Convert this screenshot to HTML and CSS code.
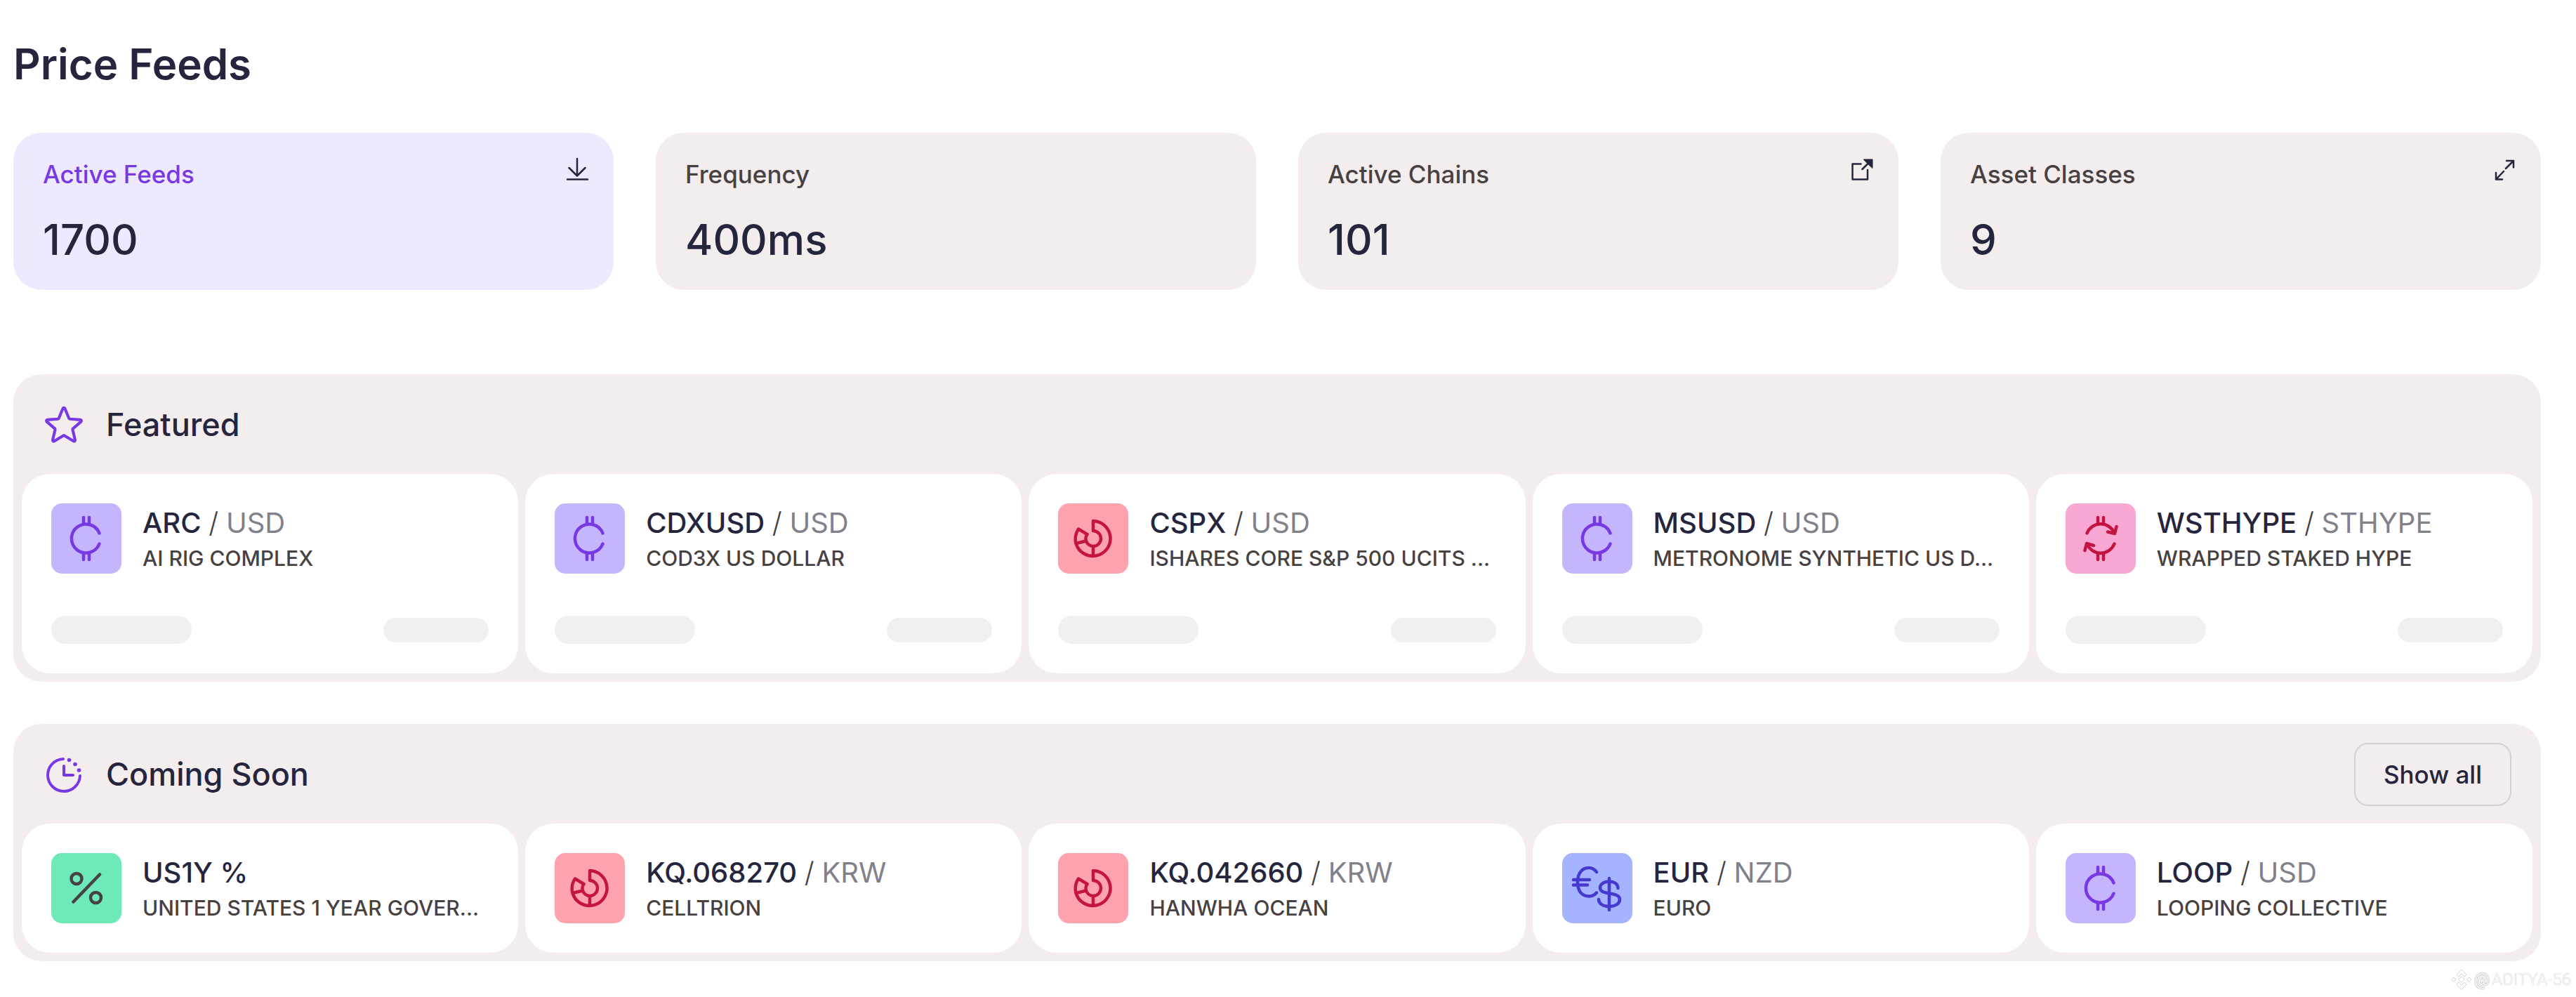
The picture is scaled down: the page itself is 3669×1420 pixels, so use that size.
FILE: index.html
```html
<!DOCTYPE html>
<html lang="en">
<head>
<meta charset="utf-8">
<title>Price Feeds</title>
<link rel="stylesheet" href="styles.css">
</head>

<body>
<!-- shared icons, 100x100 -->
<svg class="sprite" aria-hidden="true">
    <symbol id="crypto" viewBox="0 0 100 100">
        <path d="M68.5 42.5A20.5 20.5 0 1 0 68.5 57.5M46 20V30M54 20V30M46 70V80M54 70V80"/>
    </symbol>
    <symbol id="equity" viewBox="0 0 100 100">
        <path d="M50 25A25 25 0 1 1 25.5 57A26 26 0 0 1 29 36.5L41.500 44A11 11 0 0 0 40 53.500L25.500 57M50 25V39A11 11 0 0 1 50 61V75M50 61A11 11 0 0 1 40 53.500"/>
    </symbol>
    <symbol id="redemption" viewBox="0 0 100 100">
        <path d="M30.500 42.500A21 21 0 0 1 69.500 42.500M60 40.500L70 43L72.500 33M69.500 57.500A21 21 0 0 1 30.500 57.500M40 60L30 57L27.500 67M46 20V29M54 20V29M46 71V80M54 71V80"/>
    </symbol>
    <symbol id="rates" viewBox="0 0 100 100">
        <circle cx="36" cy="36.500" r="7.500"/>
        <circle cx="63.500" cy="63.500" r="7.500"/>
        <path d="M31.500 69.500L69 30.500"/>
    </symbol>
    <symbol id="fx" viewBox="0 0 100 100">
        <path d="M49 27C46 23 42 21 38 21C28 21 22 29 22 41.500C22 54 28 61.500 38 61.500C42 61.500 46 60 49 56.500M16 38H39M16 45.500H36M67 36V81M79.500 50C79.500 44 74 40.500 67 40.500C60 40.500 54 44 54 49.500C54 61 82 54 82 66C82 72 76 76 67 76C58 76 52 72 52 66"/>
    </symbol>
</svg>

<main class="page">
    <h1 class="page-title">Price Feeds</h1>

    <div class="stats">
        <div class="stat active">
            <div class="stat-text">
                <div class="stat-label">Active Feeds</div>
                <div class="stat-value">1700</div>
            </div>
            <button class="stat-action" type="button" aria-label="Go to feeds">
                <svg viewBox="0 0 40 40"><path d="M20 5V29M8.500 18L20 29.500L31.500 18M6 34.500H35"/></svg>
            </button>
        </div>
        <div class="stat">
            <div class="stat-text">
                <div class="stat-label">Frequency</div>
                <div class="stat-value">400ms</div>
            </div>
        </div>
        <div class="stat">
            <div class="stat-text">
                <div class="stat-label">Active Chains</div>
                <div class="stat-value">101</div>
            </div>
            <a class="stat-action" href="#chains" aria-label="Chains">
                <svg viewBox="0 0 40 40"><path d="M18.500 12.500H6.500V34.500H28V21M20.500 20L30 10.500"/><path class="solid" d="M22.500 6H35V18.500L31 15L26.500 10.500Z"/></svg>
            </a>
        </div>
        <div class="stat">
            <div class="stat-text">
                <div class="stat-label">Asset Classes</div>
                <div class="stat-value">9</div>
            </div>
            <button class="stat-action" type="button" aria-label="Expand">
                <svg viewBox="0 0 40 40"><path d="M23 8H33V17.500M33 8L22 19M8 25V34.500H17M8 34.500L19 23"/></svg>
            </button>
        </div>
    </div>

    <section class="panel">
        <div class="panel-head">
            <svg class="panel-icon" viewBox="1 1 22 22"><path stroke-width="1.500" d="M11.480 3.499a.562.562 0 011.040 0l2.125 5.111a.563.563 0 00.475.345l5.518.442c.499.040.701.663.321.988l-4.204 3.602a.563.563 0 00-.182.557l1.285 5.385a.562.562 0 01-.840.610l-4.725-2.885a.563.563 0 00-.586 0L6.982 20.540a.562.562 0 01-.840-.610l1.285-5.386a.562.562 0 00-.182-.557l-4.204-3.602a.563.563 0 01.321-.988l5.518-.442a.563.563 0 00.475-.345L11.480 3.500z"/></svg>
            <h2 class="panel-title">Featured</h2>
        </div>
        <div class="feeds">
            <article class="feed">
                <div class="feed-top">
                    <svg class="feed-icon crypto"><use href="#crypto"/></svg>
                    <div class="feed-text">
                        <div class="feed-name">ARC <span class="slash">/</span> <span class="quote">USD</span></div>
                        <div class="feed-desc">AI RIG COMPLEX</div>
                    </div>
                </div>
                <div class="loading"><span class="bar price"></span><span class="bar change"></span></div>
            </article>
            <article class="feed">
                <div class="feed-top">
                    <svg class="feed-icon crypto"><use href="#crypto"/></svg>
                    <div class="feed-text">
                        <div class="feed-name">CDXUSD <span class="slash">/</span> <span class="quote">USD</span></div>
                        <div class="feed-desc">COD3X US DOLLAR</div>
                    </div>
                </div>
                <div class="loading"><span class="bar price"></span><span class="bar change"></span></div>
            </article>
            <article class="feed">
                <div class="feed-top">
                    <svg class="feed-icon equity"><use href="#equity"/></svg>
                    <div class="feed-text">
                        <div class="feed-name">CSPX <span class="slash">/</span> <span class="quote">USD</span></div>
                        <div class="feed-desc">ISHARES CORE S&amp;P 500 UCITS ...</div>
                    </div>
                </div>
                <div class="loading"><span class="bar price"></span><span class="bar change"></span></div>
            </article>
            <article class="feed">
                <div class="feed-top">
                    <svg class="feed-icon crypto"><use href="#crypto"/></svg>
                    <div class="feed-text">
                        <div class="feed-name">MSUSD <span class="slash">/</span> <span class="quote">USD</span></div>
                        <div class="feed-desc">METRONOME SYNTHETIC US D...</div>
                    </div>
                </div>
                <div class="loading"><span class="bar price"></span><span class="bar change"></span></div>
            </article>
            <article class="feed">
                <div class="feed-top">
                    <svg class="feed-icon redemption"><use href="#redemption"/></svg>
                    <div class="feed-text">
                        <div class="feed-name">WSTHYPE <span class="slash">/</span> <span class="quote">STHYPE</span></div>
                        <div class="feed-desc">WRAPPED STAKED HYPE</div>
                    </div>
                </div>
                <div class="loading"><span class="bar price"></span><span class="bar change"></span></div>
            </article>
        </div>
    </section>

    <section class="panel">
        <div class="panel-head">
            <svg class="panel-icon" viewBox="0 0 60 60">
                <path stroke-width="4" d="M29 8A23 23 0 1 0 53 32M30 18V31H43"/>
                <g class="dots"><circle cx="37.500" cy="9.500" r="2.800"/><circle cx="46" cy="15.500" r="2.800"/><circle cx="51.500" cy="24" r="2.800"/></g>
            </svg>
            <h2 class="panel-title">Coming Soon</h2>
            <button class="show-all" type="button">Show all</button>
        </div>
        <div class="feeds">
            <article class="feed">
                <div class="feed-top">
                    <svg class="feed-icon rates"><use href="#rates"/></svg>
                    <div class="feed-text">
                        <div class="feed-name">US1Y %</div>
                        <div class="feed-desc">UNITED STATES 1 YEAR GOVER...</div>
                    </div>
                </div>
            </article>
            <article class="feed">
                <div class="feed-top">
                    <svg class="feed-icon equity"><use href="#equity"/></svg>
                    <div class="feed-text">
                        <div class="feed-name">KQ.068270 <span class="slash">/</span> <span class="quote">KRW</span></div>
                        <div class="feed-desc">CELLTRION</div>
                    </div>
                </div>
            </article>
            <article class="feed">
                <div class="feed-top">
                    <svg class="feed-icon equity"><use href="#equity"/></svg>
                    <div class="feed-text">
                        <div class="feed-name">KQ.042660 <span class="slash">/</span> <span class="quote">KRW</span></div>
                        <div class="feed-desc">HANWHA OCEAN</div>
                    </div>
                </div>
            </article>
            <article class="feed">
                <div class="feed-top">
                    <svg class="feed-icon fx"><use href="#fx"/></svg>
                    <div class="feed-text">
                        <div class="feed-name">EUR <span class="slash">/</span> <span class="quote">NZD</span></div>
                        <div class="feed-desc">EURO</div>
                    </div>
                </div>
            </article>
            <article class="feed">
                <div class="feed-top">
                    <svg class="feed-icon crypto"><use href="#crypto"/></svg>
                    <div class="feed-text">
                        <div class="feed-name">LOOP <span class="slash">/</span> <span class="quote">USD</span></div>
                        <div class="feed-desc">LOOPING COLLECTIVE</div>
                    </div>
                </div>
            </article>
        </div>
    </section>
</main>

<div class="watermark">
    <svg viewBox="0 0 30 30"><path d="M8 8L15 1L22 8L19 11L15 7L11 11ZM1 15L4 12L7 15L4 18ZM11 15L15 11L19 15L15 19ZM23 15L26 12L29 15L26 18ZM8 22L11 19L15 23L19 19L22 22L15 29Z"/></svg>
    <span class="at">@</span>
    <span>ADITYA-56</span>
</div>
</body>
</html>
```
FILE: styles.css
```css
* {
    box-sizing: border-box;
}
body {
    margin: 0;
    background: #ffffff;
    color: #25253d;
    font-family: Inter, "Liberation Sans", sans-serif;
    font-weight: 500;
}
h1, h2 {
    margin: 0;
}
svg {
    flex: none;
    fill: none;
    stroke: currentColor;
    stroke-linecap: round;
    stroke-linejoin: round;
}
.sprite {
    position: absolute;
    width: 0;
    height: 0;
}
.page {
    padding: 61px 50px 51px 19px;
}
.page-title {
    margin-bottom: 68px;
    font-size: 60px;
    line-height: 60px;
    font-weight: 600;
}

/* stats */
.stats {
    display: grid;
    grid-template-columns: repeat(4, 1fr);
    gap: 60px;
    margin-bottom: 120px;
}
.stat {
    display: flex;
    justify-content: space-between;
    align-items: flex-start;
    padding: 32px;
    border-radius: 40px;
    background: #f3eded;
}
.stat.active {
    background: #ede9fe;
}
.stat-text {
    padding: 10px;
}
.stat-label {
    margin-bottom: 45px;
    color: #474142;
    font-size: 35px;
    line-height: 35px;
}
.active .stat-label {
    color: #7839e5;
}
.stat-value {
    font-size: 60px;
    line-height: 60px;
}
.stat-action {
    width: 40px;
    height: 40px;
    padding: 0;
    border: none;
    background: none;
    color: #25253d;
    cursor: pointer;
}
.stat-action svg {
    display: block;
    width: 40px;
    height: 40px;
    stroke-width: 2.5;
}
.solid {
    fill: currentColor;
    stroke-width: 1;
}

/* panels */
.panel {
    padding: 0 12px 12px;
    border-radius: 40px;
    background: #f3eded;
}
.panel + .panel {
    margin-top: 60px;
}
.panel-head {
    display: flex;
    align-items: center;
    gap: 30px;
    height: 142px;
    padding: 2px 30px 0;
}
.panel-icon {
    width: 60px;
    height: 60px;
    color: #7839e5;
}
.dots {
    fill: currentColor;
    stroke: none;
}
.panel-title {
    font-size: 45px;
    line-height: 60px;
    font-weight: 500;
}
.show-all {
    height: 90px;
    margin-left: auto;
    padding: 0 40px;
    border: 2px solid #d2d2d2;
    border-radius: 20px;
    background: none;
    color: #25253d;
    font: inherit;
    font-size: 35px;
    cursor: pointer;
}

/* feeds */
.feeds {
    display: grid;
    grid-template-columns: repeat(5, minmax(0, 1fr));
    gap: 10px;
}
.feed {
    padding: 42px;
    border-radius: 40px;
    background: #ffffff;
}
.feed-top {
    display: flex;
    gap: 30px;
}
.feed-icon {
    width: 100px;
    height: 100px;
    border-radius: 15px;
    stroke-width: 4.5;
}
.crypto {
    background: #c4b5fd;
    color: #7839e5;
}
.equity {
    background: #fea3ae;
    color: #c31442;
}
.redemption {
    background: #f9a8d4;
    color: #c31442;
}
.rates {
    background: #6ee9b8;
    color: #474142;
}
.fx {
    background: #a5b4fe;
    color: #4639d0;
}
.feed-text {
    min-width: 0;
    white-space: nowrap;
}
.feed-name {
    font-size: 40px;
    line-height: 56px;
}
.slash {
    color: #474142;
    font-weight: 300;
}
.quote {
    color: #81818c;
    font-weight: 400;
}
.feed-desc {
    overflow: hidden;
    color: #474142;
    font-size: 30px;
    line-height: 44px;
    text-overflow: ellipsis;
}
.loading {
    display: flex;
    justify-content: space-between;
    align-items: center;
    margin-top: 60px;
}
.bar {
    border-radius: 20px;
    background: #f0f0ef;
}
.price {
    width: 200px;
    height: 40px;
}
.change {
    width: 150px;
    height: 35px;
}

.watermark {
    position: fixed;
    right: 7px;
    bottom: 10px;
    display: flex;
    align-items: center;
    gap: 3px;
    color: #ffffff;
    font-family: Roboto, sans-serif;
    font-size: 24px;
    line-height: 30px;
    font-weight: 300;
    text-shadow: 0 0 1px #85858c;
}
.watermark svg {
    width: 30px;
    height: 30px;
    fill: #ffffff;
    stroke: #d5d0d2;
}
.at {
    font-weight: 400;
    text-shadow: 0 0 2px #66626a;
}
```
